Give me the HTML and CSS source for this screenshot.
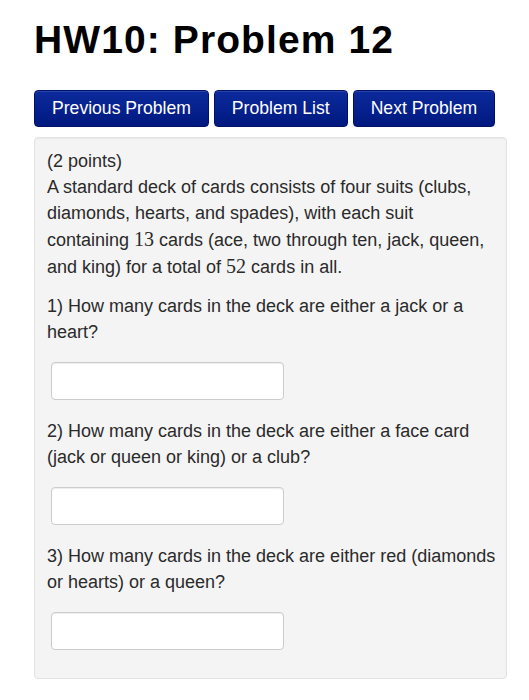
FILE: index.html
```html
<!DOCTYPE html>
<html>
<head>
<meta charset="utf-8">
<title>HW10: Problem 12</title>
<link rel="stylesheet" href="styles.css">
</head>
<body>
<div class="page">
  <h1 class="title">HW10: Problem 12</h1>
  <div class="nav">
    <a class="btn">Previous Problem</a>
    <a class="btn">Problem List</a>
    <a class="btn">Next Problem</a>
  </div>
  <div class="well">
    <p class="intro">(2 points)<br>A standard deck of cards consists of four suits (clubs, diamonds, hearts, and spades), with each suit containing <span class="math">13</span> cards (ace, two through ten, jack, queen, and king) for a total of <span class="math">52</span> cards in all.</p>
    <p class="q">1) How many cards in the deck are either a jack or a heart?</p>
    <input class="answer" type="text">
    <p class="q">2) How many cards in the deck are either a face card (jack or queen or king) or a club?</p>
    <input class="answer" type="text">
    <p class="q">3) How many cards in the deck are either red (diamonds or hearts) or a queen?</p>
    <input class="answer" type="text">
  </div>
</div>
</body>
</html>
```
FILE: styles.css
```css
html, body {
  margin: 0;
  padding: 0;
  background: #ffffff;
}
.page {
  padding-left: 34px;
  width: 474px;
  font-family: "Liberation Sans", Arial, sans-serif;
  color: #333333;
}
.title {
  margin: 18px 0 0 0;
  font-size: 39px;
  line-height: 44px;
  font-weight: bold;
  letter-spacing: 1.1px;
  color: #000000;
}
.nav {
  display: flex;
  gap: 5px;
  margin-top: 28px;
}
.btn {
  display: block;
  padding: 7px 17px;
  font-size: 17.6px;
  line-height: 21px;
  color: #ffffff;
  background: linear-gradient(#0c2a9c, #00197f);
  border: 1px solid #001266;
  border-radius: 4px;
  box-shadow: inset 0 1px 0 rgba(255,255,255,0.12);
  white-space: nowrap;
}
.well {
  margin-top: 10px;
  width: 452px;
  background: #f4f4f4;
  border: 1px solid #e3e3e3;
  border-radius: 4px;
  padding: 10px 7px 28px 12px;
  box-shadow: inset 0 1px 1px rgba(0,0,0,0.04);
  font-size: 18px;
  line-height: 26px;
  color: #2a2a2a;
}
.well p {
  margin: 0;
}
.intro {
  margin-bottom: 13px !important;
}
.math {
  font-family: "Liberation Serif", "Times New Roman", serif;
  font-size: 20px;
}
.answer {
  display: block;
  box-sizing: border-box;
  width: 233px;
  height: 38px;
  margin: 17px 0 18px 4px;
  padding: 4px 6px;
  background: #ffffff;
  border: 1px solid #cccccc;
  border-radius: 4px;
  box-shadow: inset 0 1px 1px rgba(0,0,0,0.075);
  font-size: 17px;
}
.answer:last-child {
  margin-bottom: 0;
}
```
